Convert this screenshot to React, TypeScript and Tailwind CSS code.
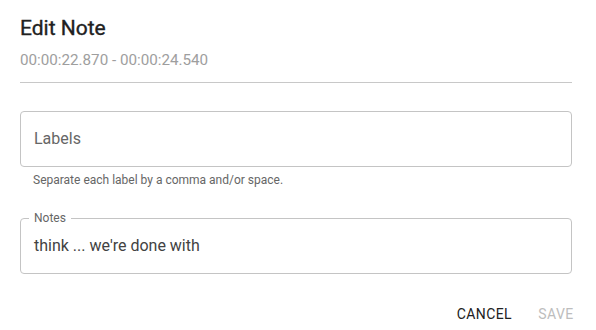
import React from "react";

export default function App() {
  return (
    <div
      className="w-[596px] h-[330px] bg-white flex flex-col overflow-hidden"
      style={{ fontFamily: "Roboto, 'Liberation Sans', sans-serif" }}
    >
      <div className="pl-5 pr-6 pt-[14px]">
        {/* Title */}
        <h2 className="text-[21px] leading-[28px] font-normal text-[#212121] [-webkit-text-stroke:0.35px_#212121]">
          Edit Note
        </h2>
        <div className="mt-[7px] text-[15.2px] leading-[22px] text-[#9e9e9e]">
          00:00:22.870 - 00:00:24.540
        </div>
        <div className="mt-[11px] h-px bg-[#c8c8c8]" />

        {/* Labels field */}
        <div className="mt-[28px]">
          <div className="h-[56px] rounded border border-[#c4c4c4] flex items-center px-[13px]">
            <span className="text-base text-[#666666]">Labels</span>
          </div>
          <p className="mt-[3px] mx-[13px] text-xs leading-[20px] text-[#666666]">
            Separate each label by a comma and/or space.
          </p>
        </div>

        {/* Notes field */}
        <div className="relative mt-[28px]">
          <div className="h-[56px] rounded border border-[#c4c4c4] flex items-center px-[13px]">
            <span className="text-base text-[#424242]">think ... we're done with</span>
          </div>
          <span className="absolute left-[9px] -top-[8px] px-[5px] bg-white text-xs leading-[16px] text-[#666666]">
            Notes
          </span>
        </div>
      </div>

      {/* Actions */}
      <div className="mt-[22px] flex justify-end gap-1 px-2">
        <button className="min-w-[64px] px-2 py-[6px] text-sm leading-[24px] font-normal uppercase tracking-[0.4px] text-[#212121] rounded">
          Cancel
        </button>
        <button
          disabled
          className="min-w-[64px] px-2 py-[6px] text-sm leading-[24px] font-normal uppercase tracking-[0.4px] text-[#bdbdbd] rounded"
        >
          Save
        </button>
      </div>
    </div>
  );
}
